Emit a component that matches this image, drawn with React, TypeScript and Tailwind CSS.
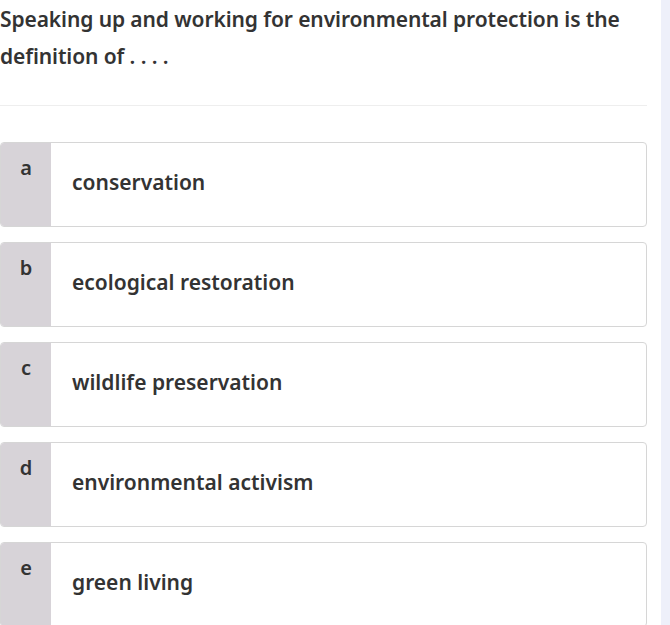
const options = [
  { key: "a", text: "conservation" },
  { key: "b", text: "ecological restoration" },
  { key: "c", text: "wildlife preservation" },
  { key: "d", text: "environmental activism" },
  { key: "e", text: "green living" },
];

export default function App() {
  return (
    <div className="flex h-[625px] w-[670px] overflow-hidden bg-white font-['Noto_Sans','Open_Sans',sans-serif] text-[#333333]">
      <div className="w-[647px] shrink-0">
        <div className="pt-[1px] pb-[30px] text-[21px] font-semibold leading-[37px] tracking-[-0.1px]">
          Speaking up and working for environmental protection is the
          <br />
          definition of . . . .
        </div>
        <div className="border-t border-[#eeeeee]" />
        <div className="mt-[36px] flex flex-col gap-[15px]">
          {options.map(o => (
            <div key={o.key} className="flex h-[85px] shrink-0 overflow-hidden rounded-[4px] border border-[#d6d6d6]">
              <div className="flex w-[50px] shrink-0 justify-center bg-[#d7d3d8] pt-[14px] text-[20px] font-semibold leading-[22px]">
                {o.key}
              </div>
              <div className="flex flex-1 items-center pb-[4px] pl-[21px] text-[21px] font-semibold">
                {o.text}
              </div>
            </div>
          ))}
        </div>
      </div>
      <div className="w-[14px]" />
      <div className="flex-1 bg-[#eef0fa]" />
    </div>
  );
}
